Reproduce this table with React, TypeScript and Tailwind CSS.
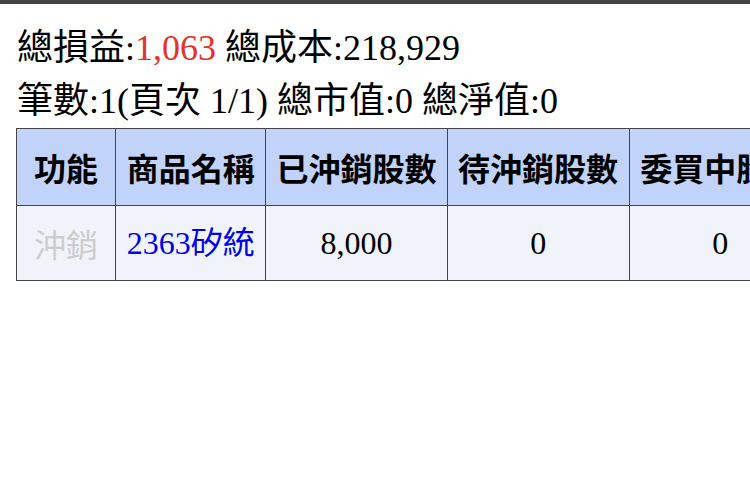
export default function App() {
  const font = { fontFamily: '"Liberation Serif", "Noto Sans CJK TC", serif' };
  const sans = { fontFamily: '"Noto Sans CJK TC", sans-serif' };
  const cols = [
    { title: "功能", w: "w-[99px]" },
    { title: "商品名稱", w: "w-[150px]" },
    { title: "已沖銷股數", w: "w-[181px]" },
    { title: "待沖銷股數", w: "w-[182px]" },
    { title: "委買中股數", w: "w-[182px]" },
  ];

  return (
    <main className="w-[750px] h-[495px] overflow-hidden bg-white text-black" style={font}>
      {/* top bar */}
      <div className="h-1 bg-[#444444]" />

      <div className="pt-[18px] pl-[17px] text-[36px] leading-[53px] whitespace-nowrap">
        <div>
          總損益:<span className="text-[#e8302a]">1,063</span> 總成本:218,929
        </div>
        <div>筆數:1(頁次 1/1) 總市值:0 總淨值:0</div>
      </div>

      <div className="pl-4">
        <table className="border-collapse table-fixed w-[796px]">
          <thead>
            <tr className="h-[77px] bg-[#c1d3f8]">
              {cols.map((c) => (
                <th
                  key={c.title}
                  className={`${c.w} border border-[#444444] px-0 text-[32px] font-bold whitespace-nowrap overflow-hidden`}
                  style={sans}
                >
                  {c.title}
                </th>
              ))}
            </tr>
          </thead>
          <tbody>
            <tr className="h-[75px] bg-[#f0f4fa] text-[32px] text-center">
              <td className="border border-[#444444] text-[#cccccc]" style={sans}>
                沖銷
              </td>
              <td className="border border-[#444444] text-[#0000ee]">2363矽統</td>
              <td className="border border-[#444444]">8,000</td>
              <td className="border border-[#444444]">0</td>
              <td className="border border-[#444444]">0</td>
            </tr>
          </tbody>
        </table>
      </div>
    </main>
  );
}
